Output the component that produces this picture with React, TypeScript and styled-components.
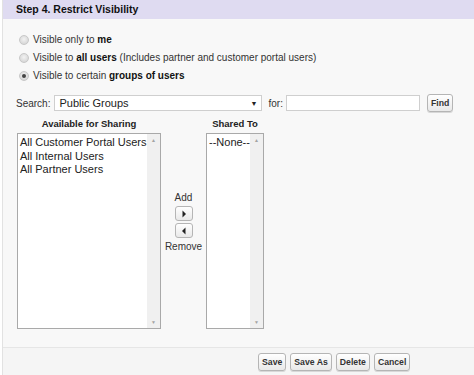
import React from 'react'
import styled, { createGlobalStyle } from 'styled-components'

const GlobalStyle = createGlobalStyle`
  html, body {
    margin: 0;
    padding: 0;
    background: #ffffff;
    font-family: 'Liberation Sans', Arial, sans-serif;
  }
`

const App = () => {
    return (
        <>
            <GlobalStyle />
            <Panel>
                <Header>Step 4. Restrict Visibility</Header>

                <Body>
                    <RadioGroup>
                        <RadioRow>
                            <Radio />
                            <span>Visible only to <b>me</b></span>
                        </RadioRow>
                        <RadioRow>
                            <Radio />
                            <span>Visible to <b>all users</b> (Includes partner and customer portal users)</span>
                        </RadioRow>
                        <RadioRow>
                            <Radio checked />
                            <span>Visible to certain <b>groups of users</b></span>
                        </RadioRow>
                    </RadioGroup>

                    <SearchRow>
                        <Label>Search:</Label>
                        <Select>
                            <span>Public Groups</span>
                            <Caret>▼</Caret>
                        </Select>
                        <Label>for:</Label>
                        <TextInput />
                        <SmallButton>Find</SmallButton>
                    </SearchRow>

                    <Picker>
                        <Column>
                            <ColumnTitle>Available for Sharing</ColumnTitle>
                            <ListBox width={144}>
                                <Items>
                                    <Item>All Customer Portal Users</Item>
                                    <Item>All Internal Users</Item>
                                    <Item>All Partner Users</Item>
                                </Items>
                                <ScrollTrack>
                                    <Arrow>▲</Arrow>
                                    <Arrow>▼</Arrow>
                                </ScrollTrack>
                            </ListBox>
                        </Column>

                        <Middle>
                            <MidLabel>Add</MidLabel>
                            <ArrowButton>
                                <svg width="6" height="8" viewBox="0 0 6 8"><path d="M1.5 0.5 L5 4 L1.5 7.5 Z" fill="#222" /></svg>
                            </ArrowButton>
                            <ArrowButton>
                                <svg width="6" height="8" viewBox="0 0 6 8"><path d="M4.5 0.5 L1 4 L4.5 7.5 Z" fill="#222" /></svg>
                            </ArrowButton>
                            <MidLabel>Remove</MidLabel>
                        </Middle>

                        <Column>
                            <ColumnTitle>Shared To</ColumnTitle>
                            <ListBox width={58}>
                                <Items>
                                    <Item>--None--</Item>
                                </Items>
                                <ScrollTrack>
                                    <Arrow>▲</Arrow>
                                    <Arrow>▼</Arrow>
                                </ScrollTrack>
                            </ListBox>
                        </Column>
                    </Picker>
                </Body>

                <Footer>
                    <SmallButton>Save</SmallButton>
                    <SmallButton>Save As</SmallButton>
                    <SmallButton>Delete</SmallButton>
                    <SmallButton>Cancel</SmallButton>
                </Footer>
            </Panel>
        </>
    )
}

export default App

export const Panel = styled.div`
    width: 471px;
    height: 375px;
    margin-left: 2px;
    border-left: 1px solid #e2e2e2;
    background: #f8f8f8;
    display: flex;
    flex-direction: column;
    color: #222;
`

export const Header = styled.div`
    height: 19px;
    line-height: 19px;
    padding-left: 13px;
    background: #dfdbf1;
    font-size: 10.5px;
    font-weight: bold;
    color: #111;
`

export const Body = styled.div`
    flex: 1;
    padding: 0 0 0 13px;
    display: flex;
    flex-direction: column;
`

export const RadioGroup = styled.div`
    padding-top: 14px;
    display: flex;
    flex-direction: column;
    gap: 5px;
`

export const RadioRow = styled.div`
    display: flex;
    align-items: center;
    gap: 4px;
    height: 13px;
    font-size: 10px;
    color: #333;
    b {
        color: #111;
    }
`

export const Radio = styled.span<{ checked?: boolean }>`
    width: 10px;
    height: 10px;
    margin-left: 3px;
    border-radius: 50%;
    background: radial-gradient(circle at 50% 40%, #f2f2f2, #cfcfcf);
    border: 1px solid #c8c8c8;
    box-sizing: border-box;
    position: relative;
    &::after {
        content: '';
        display: ${p => (p.checked ? 'block' : 'none')};
        position: absolute;
        left: 2px;
        top: 2px;
        width: 4px;
        height: 4px;
        border-radius: 50%;
        background: #444;
    }
`

export const SearchRow = styled.div`
    margin-top: 12px;
    display: flex;
    align-items: center;
    height: 18px;
    font-size: 10px;
`

export const Label = styled.span`
    color: #333;
    margin-right: 3px;
`

export const Select = styled.div`
    width: 208px;
    height: 16px;
    box-sizing: border-box;
    border: 1px solid #cfcfcf;
    background: #fff;
    display: flex;
    align-items: center;
    justify-content: space-between;
    padding: 0 4px;
    font-size: 11px;
    color: #222;
    margin-left: 1px;
    margin-right: 6px;
`

export const Caret = styled.span`
    font-size: 7px;
    color: #222;
`

export const TextInput = styled.div`
    width: 134px;
    height: 16px;
    box-sizing: border-box;
    border: 1px solid #cfcfcf;
    background: #fff;
    margin-right: 7px;
`

export const SmallButton = styled.button`
    height: 18px;
    padding: 0 3px;
    font-family: 'Liberation Sans', Arial, sans-serif;
    font-size: 8.7px;
    font-weight: bold;
    color: #333;
    background: linear-gradient(#ffffff, #e9e9e9);
    border: 1px solid #b5b5b5;
    border-radius: 3px;
    box-shadow: 0 1px 0 #d8d8d8;
`

export const Picker = styled.div`
    margin-top: 4px;
    display: flex;
    align-items: flex-start;
    padding-left: 1px;
`

export const Column = styled.div`
    display: flex;
    flex-direction: column;
    align-items: center;
`

export const ColumnTitle = styled.div`
    font-size: 9.5px;
    font-weight: bold;
    color: #222;
    height: 17px;
    line-height: 16px;
`

export const ListBox = styled.div<{ width: number }>`
    width: ${p => p.width}px;
    height: 196px;
    box-sizing: border-box;
    border: 1px solid #a9a9a9;
    background: #fff;
    display: flex;
`

export const Items = styled.div`
    flex: 1;
    padding: 2px 2px;
    overflow: hidden;
`

export const Item = styled.div`
    font-size: 11px;
    line-height: 13.5px;
    white-space: nowrap;
    color: #222;
`

export const ScrollTrack = styled.div`
    width: 13px;
    background: #f0f0f0;
    display: flex;
    flex-direction: column;
    justify-content: space-between;
    align-items: center;
    padding: 3px 0;
`

export const Arrow = styled.span`
    font-size: 5px;
    color: #a3a3a3;
`

export const Middle = styled.div`
    width: 45px;
    display: flex;
    flex-direction: column;
    align-items: center;
    padding-top: 75px;
`

export const MidLabel = styled.div`
    font-size: 10px;
    line-height: 12px;
    color: #333;
    margin: 1px 0 2px;
`

export const ArrowButton = styled.div`
    width: 18px;
    height: 15px;
    margin-bottom: 2px;
    box-sizing: border-box;
    border: 1px solid #b5b5b5;
    border-radius: 3px;
    background: linear-gradient(#ffffff, #e9e9e9);
    display: flex;
    align-items: center;
    justify-content: center;
`

export const Footer = styled.div`
    border-top: 1px solid #e6e6e6;
    height: 27px;
    display: flex;
    align-items: center;
    padding-left: 255px;
    gap: 4px;
    background: #f5f5f5;
`
